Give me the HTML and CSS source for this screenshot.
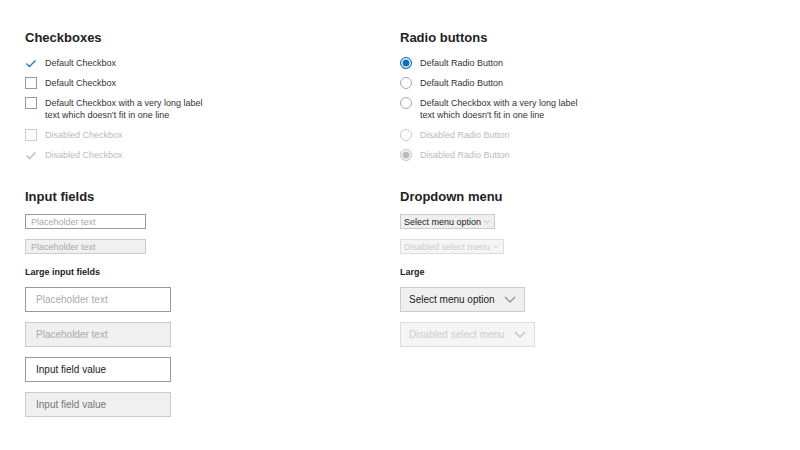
FILE: index.html
```html
<!DOCTYPE html>
<html>
<head>
<meta charset="utf-8">
<link rel="stylesheet" href="styles.css">
</head>
<body>
<div class="page">
  <section class="col">
    <h2 class="title">Checkboxes</h2>
    <div class="list">
      <div class="row"><span class="check"><svg width="12" height="12" viewBox="0 0 12 12"><polyline points="1.5,6.5 4.5,9.5 10.5,3.5" fill="none" stroke="#1f7bc0" stroke-width="1.4"/></svg></span><span class="lbl">Default Checkbox</span></div>
      <div class="row"><span class="box"></span><span class="lbl">Default Checkbox</span></div>
      <div class="row"><span class="box"></span><span class="lbl">Default Checkbox with a very long label<br>text which doesn't fit in one line</span></div>
      <div class="row dis"><span class="box"></span><span class="lbl">Disabled Checkbox</span></div>
      <div class="row dis"><span class="check"><svg width="12" height="12" viewBox="0 0 12 12"><polyline points="1.5,6.5 4.5,9.5 10.5,3.5" fill="none" stroke="#bbb" stroke-width="1.4"/></svg></span><span class="lbl">Disabled Checkbox</span></div>
    </div>
    <h2 class="title t2">Input fields</h2>
    <div class="fields">
      <div class="inp sm ph">Placeholder text</div>
      <div class="inp sm ph off">Placeholder text</div>
      <div class="sub">Large input fields</div>
      <div class="inp lg ph">Placeholder text</div>
      <div class="inp lg ph off">Placeholder text</div>
      <div class="inp lg">Input field value</div>
      <div class="inp lg val off">Input field value</div>
    </div>
  </section>
  <section class="col">
    <h2 class="title">Radio buttons</h2>
    <div class="list">
      <div class="row"><span class="radio on"></span><span class="lbl">Default Radio Button</span></div>
      <div class="row"><span class="radio"></span><span class="lbl">Default Radio Button</span></div>
      <div class="row"><span class="radio"></span><span class="lbl">Default Checkbox with a very long label<br>text which doesn't fit in one line</span></div>
      <div class="row dis"><span class="radio"></span><span class="lbl">Disabled Radio Button</span></div>
      <div class="row dis"><span class="radio on"></span><span class="lbl">Disabled Radio Button</span></div>
    </div>
    <h2 class="title t2">Dropdown menu</h2>
    <div class="fields">
      <div class="sel sm">Select menu option<svg class="chev" width="6" height="4" viewBox="0 0 6 4"><polyline points="0.5,0.5 3,3 5.5,0.5" fill="none" stroke="#bbb" stroke-width="0.9"/></svg></div>
      <div class="sel sm off">Disabled select menu<svg class="chev" width="6" height="4" viewBox="0 0 6 4"><polyline points="0.5,0.5 3,3 5.5,0.5" fill="none" stroke="#ccc" stroke-width="0.9"/></svg></div>
      <div class="sub">Large</div>
      <div class="sel lg">Select menu option<svg class="chev" width="12" height="7" viewBox="0 0 12 7"><polyline points="1,1 6,6 11,1" fill="none" stroke="#888" stroke-width="1.1"/></svg></div>
      <div class="sel lg off">Disabled select menu<svg class="chev" width="12" height="7" viewBox="0 0 12 7"><polyline points="1,1 6,6 11,1" fill="none" stroke="#bbb" stroke-width="1.1"/></svg></div>
    </div>
  </section>
</div>
</body>
</html>
```
FILE: styles.css
```css
html, body { margin: 0; padding: 0; background: #fff; }
body { font-family: "Liberation Sans", Arial, sans-serif; color: #333; }
.page { display: grid; grid-template-columns: 375px 375px; padding: 30px 25px; }
.col { display: flex; flex-direction: column; align-items: flex-start; }
.title { margin: 0; font-size: 13px; line-height: 16px; font-weight: bold; color: #222; }
.t2 { margin-top: 28px; }
.list { display: flex; flex-direction: column; gap: 8px; margin-top: 11px; }
.row { display: flex; align-items: flex-start; font-size: 9px; line-height: 12px; color: #333; }
.row.dis { color: #bbb; }
.lbl { margin-left: 8px; }
.check { width: 12px; height: 12px; display: block; }
.check svg { display: block; }
.box { width: 10px; height: 10px; border: 1px solid #999; display: block; background: #fff; }
.dis .box { border-color: #ccc; }
.radio { width: 10px; height: 10px; border: 1px solid #aaa; border-radius: 50%; display: block; box-sizing: content-box; }
.radio.on { border-color: #0a74c4; background: #0a74c4; box-shadow: inset 0 0 0 1.5px #fff; }
.dis .radio { border-color: #ccc; }
.dis .radio.on { border-color: #ccc; background: #bbb; box-shadow: inset 0 0 0 1.5px #fff; }
.fields { display: flex; flex-direction: column; align-items: flex-start; gap: 10px; margin-top: 9px; }
.inp { box-sizing: border-box; border: 1px solid #999; background: #fff; color: #222; display: flex; align-items: center; white-space: nowrap; }
.inp.sm { width: 121px; height: 15px; font-size: 9px; padding-left: 5px; }
.inp.lg { width: 146px; height: 25px; font-size: 10px; padding-left: 10px; }
.inp.ph { color: #aaa; }
.inp.off { background: #f0f0f0; border-color: #ccc; }
.inp.val.off { color: #777; }
.sub { font-size: 9px; line-height: 12px; font-weight: bold; color: #222; margin: 2px 0 -1px; }
.sel { box-sizing: border-box; border: 1px solid #ccc; background: #efefef; color: #222; display: flex; align-items: center; white-space: nowrap; }
.sel.sm { height: 15px; font-size: 9px; padding: 0 4px 0 3px; }
.sel.sm .chev { margin-left: 3px; }
.sel.lg { height: 25px; font-size: 10px; padding: 0 8px 0 8px; }
.sel.lg .chev { margin-left: 9px; }
.sel.off { background: #f5f5f5; color: #ccc; border-color: #ddd; }
```
